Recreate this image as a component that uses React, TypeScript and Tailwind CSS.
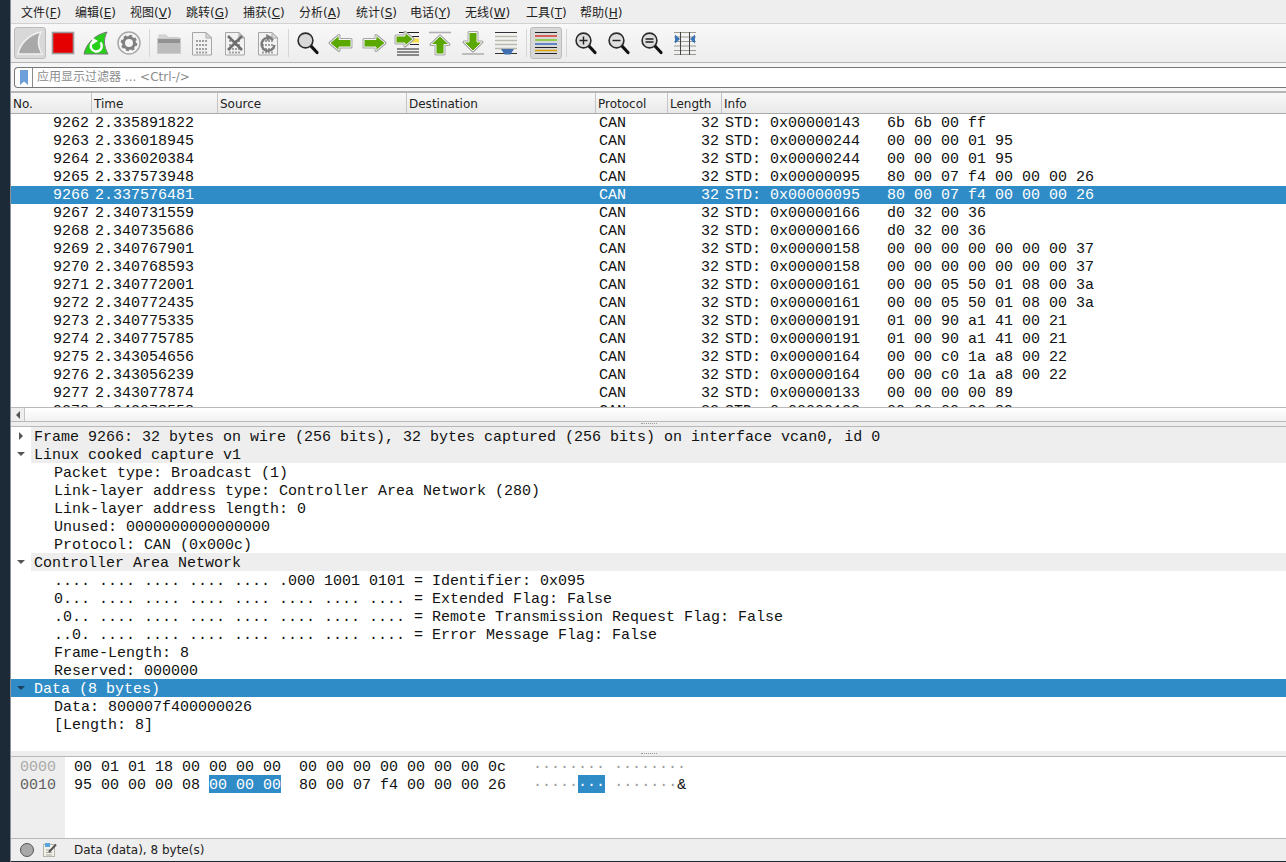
import type { ReactNode } from 'react'

const ui = 'font-["DejaVu_Sans","Noto_Sans_CJK_SC",sans-serif]'
const mono = 'font-["Liberation_Mono",monospace]'

const menus = [
  { label: '文件', key: 'F', width: 'w-[54px]' },
  { label: '编辑', key: 'E', width: 'w-[55px]' },
  { label: '视图', key: 'V', width: 'w-[56px]' },
  { label: '跳转', key: 'G', width: 'w-[57px]' },
  { label: '捕获', key: 'C', width: 'w-[56px]' },
  { label: '分析', key: 'A', width: 'w-[57px]' },
  { label: '统计', key: 'S', width: 'w-[54px]' },
  { label: '电话', key: 'Y', width: 'w-[55px]' },
  { label: '无线', key: 'W', width: 'w-[61px]' },
  { label: '工具', key: 'T', width: 'w-[54px]' },
  { label: '帮助', key: 'H', width: 'w-[60px]' },
]

const packets = [
  ['9262', '2.335891822', 'STD: 0x00000143   6b 6b 00 ff'],
  ['9263', '2.336018945', 'STD: 0x00000244   00 00 00 01 95'],
  ['9264', '2.336020384', 'STD: 0x00000244   00 00 00 01 95'],
  ['9265', '2.337573948', 'STD: 0x00000095   80 00 07 f4 00 00 00 26'],
  ['9266', '2.337576481', 'STD: 0x00000095   80 00 07 f4 00 00 00 26'],
  ['9267', '2.340731559', 'STD: 0x00000166   d0 32 00 36'],
  ['9268', '2.340735686', 'STD: 0x00000166   d0 32 00 36'],
  ['9269', '2.340767901', 'STD: 0x00000158   00 00 00 00 00 00 00 37'],
  ['9270', '2.340768593', 'STD: 0x00000158   00 00 00 00 00 00 00 37'],
  ['9271', '2.340772001', 'STD: 0x00000161   00 00 05 50 01 08 00 3a'],
  ['9272', '2.340772435', 'STD: 0x00000161   00 00 05 50 01 08 00 3a'],
  ['9273', '2.340775335', 'STD: 0x00000191   01 00 90 a1 41 00 21'],
  ['9274', '2.340775785', 'STD: 0x00000191   01 00 90 a1 41 00 21'],
  ['9275', '2.343054656', 'STD: 0x00000164   00 00 c0 1a a8 00 22'],
  ['9276', '2.343056239', 'STD: 0x00000164   00 00 c0 1a a8 00 22'],
  ['9277', '2.343077874', 'STD: 0x00000133   00 00 00 00 89'],
  ['9278', '2.343078558', 'STD: 0x00000133   00 00 00 00 89'],
]

type TreeRow = { text: string; level: 0 | 1; open?: boolean; closed?: boolean; selected?: boolean }

const tree: TreeRow[] = [
  { text: 'Frame 9266: 32 bytes on wire (256 bits), 32 bytes captured (256 bits) on interface vcan0, id 0', level: 0, closed: true },
  { text: 'Linux cooked capture v1', level: 0, open: true },
  { text: 'Packet type: Broadcast (1)', level: 1 },
  { text: 'Link-layer address type: Controller Area Network (280)', level: 1 },
  { text: 'Link-layer address length: 0', level: 1 },
  { text: 'Unused: 0000000000000000', level: 1 },
  { text: 'Protocol: CAN (0x000c)', level: 1 },
  { text: 'Controller Area Network', level: 0, open: true },
  { text: '.... .... .... .... .... .000 1001 0101 = Identifier: 0x095', level: 1 },
  { text: '0... .... .... .... .... .... .... .... = Extended Flag: False', level: 1 },
  { text: '.0.. .... .... .... .... .... .... .... = Remote Transmission Request Flag: False', level: 1 },
  { text: '..0. .... .... .... .... .... .... .... = Error Message Flag: False', level: 1 },
  { text: 'Frame-Length: 8', level: 1 },
  { text: 'Reserved: 000000', level: 1 },
  { text: 'Data (8 bytes)', level: 0, open: true, selected: true },
  { text: 'Data: 800007f400000026', level: 1 },
  { text: '[Length: 8]', level: 1 },
]

function Icon({ children }: { children: ReactNode }) {
  return (
    <svg width="28" height="28" viewBox="0 0 28 28" fill="none">
      {children}
    </svg>
  )
}

function Tool({ children, active }: { children: ReactNode; active?: boolean }) {
  return (
    <div className={`w-[32px] h-[32px] flex items-center justify-center rounded-[3px] border ${active ? 'bg-[#d8d8d8] border-[#bcbcbc]' : 'border-transparent'}`}>
      {children}
    </div>
  )
}

function Sep() {
  return <div className="w-[6px] h-[28px] flex justify-center"><div className="w-px h-full bg-[#d6d6d6]" /></div>
}

const finPath = 'M2 25 C4 15 12 6 25 3 C21 10 22 18 26 25 Z'

function DocIcon({ children }: { children?: ReactNode }) {
  return (
    <Icon>
      <path d="M4.5 3.5 H18 L23.5 9 V26 H4.5 Z" fill="#f2f2f2" stroke="#a6a6a6" />
      <path d="M18 3.5 V9 H23.5 Z" fill="#dcdcdc" stroke="#a6a6a6" />
      <path d="M8 12 H20 M8 16 H20 M8 20 H20 M8 23.5 H20" stroke="#a0a0a0" strokeWidth="2" strokeDasharray="2 1" />
      {children}
    </Icon>
  )
}

function Magnifier({ children, plain }: { children?: ReactNode; plain?: boolean }) {
  return (
    <Icon>
      <path d="M16.5 16.5 L23 23.5" stroke="#111" strokeWidth="3.2" strokeLinecap="round" />
      <circle cx="11.5" cy="11.5" r="7.4" fill={plain ? '#d8d8d8' : '#dedede'} stroke="#2a2a2a" strokeWidth="1.6" />
      {children}
    </Icon>
  )
}

function Arrow({ d }: { d: string }) {
  return (
    <>
      <path d={d} fill="#5aa800" stroke="#a6a6a6" strokeWidth="3" strokeLinejoin="round" />
      <path d={d} fill="#5aa800" stroke="#f4f4f4" strokeWidth="1" strokeLinejoin="round" />
    </>
  )
}

function Toolbar() {
  return (
    <div className="h-[38px] pl-[3px] flex items-center gap-px bg-gradient-to-b from-[#f8f8f8] to-[#ededed]">
      <Tool active>
        <Icon><path d={finPath} fill="#a9a9a9" stroke="#f1f1f1" strokeWidth="1.5" /></Icon>
      </Tool>
      <Tool>
        <Icon>
          <rect x="3.5" y="3.5" width="21" height="21" fill="#e40000" stroke="#9c9c9c" strokeWidth="1.6" />
        </Icon>
      </Tool>
      <Tool>
        <Icon>
          <path d={finPath} fill="#26d018" stroke="#777" strokeWidth="1" />
          <path d="M18.5 13.5 A5.5 5.5 0 1 1 12 12" stroke="#fff" strokeWidth="2.4" />
          <path d="M10 8.5 L16 12 L10.5 15.5 Z" fill="#fff" />
        </Icon>
      </Tool>
      <Tool>
        <Icon>
          <circle cx="14" cy="14" r="11" fill="#f6f6f6" stroke="#a8a8a8" strokeWidth="1.5" />
          <circle cx="14" cy="14" r="5.5" stroke="#808080" strokeWidth="3" />
          <circle cx="14" cy="14" r="7.3" stroke="#808080" strokeWidth="2" strokeDasharray="3 2.73" />
        </Icon>
      </Tool>
      <Sep />
      <Tool>
        <Icon>
          <path d="M4 6 H11 L13 8.5 H24 V11 H4 Z" fill="#d4d4d4" stroke="#cccccc" />
          <rect x="2.5" y="9.5" width="23" height="15" fill="#bcbcbc" stroke="#cccccc" />
          <rect x="3" y="10" width="22" height="4" fill="#929292" />
        </Icon>
      </Tool>
      <Tool><DocIcon /></Tool>
      <Tool>
        <DocIcon>
          <path d="M7 7 L21 21 M21 7 L7 21" stroke="#6e6e6e" strokeWidth="2.6" />
        </DocIcon>
      </Tool>
      <Tool>
        <DocIcon>
          <path d="M19 11 A6.5 6.5 0 1 0 20.5 16" stroke="#7b7b7b" strokeWidth="2.4" />
          <path d="M12 5 L18 8 L13 12 Z" fill="#7b7b7b" />
        </DocIcon>
      </Tool>
      <Sep />
      <Tool><Magnifier plain /></Tool>
      <Tool>
        <Icon><Arrow d="M3 14 L12 6.5 V10.5 H24 V18 H12 V21.5 Z" /></Icon>
      </Tool>
      <Tool>
        <Icon><Arrow d="M25 14 L16 6.5 V10.5 H4 V18 H16 V21.5 Z" /></Icon>
      </Tool>
      <Tool>
        <Icon>
          <path d="M6 3.5 H26 M15 7.5 H26 M17 15.5 H26 M4 20 H26 M4 23 H26 M4 26 H26" stroke="#222" />
          <rect x="18" y="9.5" width="8" height="4" fill="#f5dc4a" />
          <Arrow d="M20 10 L12 3.5 V7 H3 V14 H12 V17 Z" />
        </Icon>
      </Tool>
      <Tool>
        <Icon>
          <path d="M3 3.5 H25" stroke="#b0b0b0" strokeWidth="1.6" />
          <Arrow d="M14 7 L23 15.5 H18 V25 H10 V15.5 H5 Z" />
        </Icon>
      </Tool>
      <Tool>
        <Icon>
          <path d="M3 25 H25" stroke="#b0b0b0" strokeWidth="1.6" />
          <Arrow d="M14 22 L23 13 H18 V3.5 H10 V13 H5 Z" />
        </Icon>
      </Tool>
      <Tool>
        <Icon>
          <path d="M3 3.5 H25 M3 24.5 H25" stroke="#333" />
          <path d="M3 7.5 H25 M3 11.5 H25 M3 15.5 H25 M3 19.5 H25" stroke="#b9b9ad" strokeWidth="1.3" />
          <path d="M9 20 H22 L18.5 25.5 H12.5 Z" fill="#3f6fae" />
        </Icon>
      </Tool>
      <Sep />
      <Tool active>
        <Icon>
          <path d="M3 3.5 H25 M3 18.5 H25 M3 24.5 H25" stroke="#222" />
          <path d="M3 7 H25" stroke="#d8372e" strokeWidth="1.5" />
          <path d="M3 11 H25" stroke="#7cc72d" strokeWidth="1.5" />
          <path d="M3 15 H25" stroke="#3a6bc0" strokeWidth="1.5" />
          <path d="M3 21.5 H25" stroke="#d9a400" strokeWidth="1.5" />
        </Icon>
      </Tool>
      <Sep />
      <Tool>
        <Magnifier><path d="M7.5 11.5 H15.5 M11.5 7.5 V15.5" stroke="#222" strokeWidth="1.4" /></Magnifier>
      </Tool>
      <Tool>
        <Magnifier><path d="M7.5 11.5 H15.5" stroke="#222" strokeWidth="1.4" /></Magnifier>
      </Tool>
      <Tool>
        <Magnifier><path d="M7.5 10 H15.5 M7.5 13 H15.5" stroke="#222" strokeWidth="1.4" /></Magnifier>
      </Tool>
      <Tool>
        <Icon>
          <path d="M3 3.5 H25 M3 8 H25 M3 12.5 H25 M3 17 H25 M3 21.5 H25 M3 25.5 H25" stroke="#9a9a8e" strokeWidth="1.2" />
          <path d="M9.5 3 V26 M18.5 3 V26" stroke="#444" />
          <path d="M4 5.5 L9 10 L4 14.5 Z M24 5.5 L19 10 L24 14.5 Z" fill="#3a74b8" />
        </Icon>
      </Tool>
    </div>
  )
}

function FilterBar() {
  return (
    <div className="h-[28px] shrink-0 pl-[3px] pt-[4px] bg-[#f6f6f6]">
      <div className="h-[21px] flex bg-white border-y border-l border-[#777] rounded-l-[4px]">
        <div className="w-[18px] flex items-center justify-center border-r border-[#8a8a8a]">
          <svg width="10" height="15" viewBox="0 0 10 15">
            <path d="M1 0 H9 V15 L5 11.5 L1 15 Z" fill="#6f9fd8" />
          </svg>
        </div>
        <div className={`pl-[4px] text-[12px] leading-[19px] text-[#8d8d8d] ${ui}`}>应用显示过滤器 ... &lt;Ctrl-/&gt;</div>
      </div>
    </div>
  )
}

function HeaderCell({ label, width }: { label: string; width: string }) {
  return <div className={`${width} h-full pl-[2px] border-r border-[#c4c4c4] leading-[23px]`}>{label}</div>
}

function ColumnHeader() {
  return (
    <div className={`h-[23px] shrink-0 flex text-[12px] text-[#222] border-b border-[#aaa] border-t-2 border-t-[#b6b6b6] bg-gradient-to-b from-[#f8f8f8] to-[#e9e9e9] ${ui}`}>
      <HeaderCell label="No." width="w-[81px]" />
      <HeaderCell label="Time" width="w-[126px]" />
      <HeaderCell label="Source" width="w-[189px]" />
      <HeaderCell label="Destination" width="w-[189px]" />
      <HeaderCell label="Protocol" width="w-[72px]" />
      <HeaderCell label="Length" width="w-[54px]" />
      <div className="pl-[2px] leading-[23px]">Info</div>
    </div>
  )
}

function PacketList() {
  return (
    <div className={`h-[293px] shrink-0 overflow-hidden bg-white text-[15px] leading-[20px] text-[#111] ${mono}`}>
      {packets.map(([no, time, info], i) => (
        <div key={no} className={`h-[18px] flex whitespace-pre ${i === 4 ? 'bg-[#308cc6] text-white' : ''}`}>
          <div className="w-[81px] pr-[3px] text-right">{no}</div>
          <div className="w-[504px] pl-[3px]">{time}</div>
          <div className="w-[72px] pl-[3px]">CAN</div>
          <div className="w-[54px] pr-[3px] text-right">32</div>
          <div className="pl-[3px]">{info}</div>
        </div>
      ))}
    </div>
  )
}

function HScrollbar() {
  return (
    <div className="h-[15px] shrink-0 flex border-y border-[#b9b9b9] bg-gradient-to-b from-[#ffffff] to-[#f2f2f2]">
      <div className="w-[14px] flex items-center justify-center border-r border-[#c4c4c4] bg-[#eeeeee]">
        <div className="w-0 h-0 border-y-[4px] border-y-transparent border-r-[4px] border-r-[#555]" />
      </div>
    </div>
  )
}

function Splitter({ height }: { height: string }) {
  return (
    <div className={`${height} shrink-0 flex items-center justify-center bg-[#eeeeee] border-b border-[#b9b9b9]`}>
      <div className="w-[16px] h-[2px] border-t border-dotted border-[#9a9a9a]" />
    </div>
  )
}

function Tree() {
  return (
    <div className={`flex-1 bg-white text-[15px] leading-[22px] text-[#111] ${mono}`}>
      {tree.map(row => (
        <div key={row.text} className={`h-[18px] flex whitespace-pre ${row.selected ? 'bg-[#308cc6] text-white' : ''}`}>
          <div className="w-[20px] flex items-center justify-center">
            {row.closed && <div className="w-0 h-0 border-y-[4px] border-y-transparent border-l-[4px] border-l-[#555]" />}
            {row.open && <div className={`w-0 h-0 border-x-[4px] border-x-transparent border-t-[4px] ${row.selected ? 'border-t-[#1d3f5c]' : 'border-t-[#555]'}`} />}
          </div>
          {row.level === 0 ? (
            <div className={`flex-1 pl-[3px] h-[18px] ${row.selected ? '' : 'bg-[#eeeeee]'}`}>{row.text}</div>
          ) : (
            <div className="pl-[23px]">{row.text}</div>
          )}
        </div>
      ))}
    </div>
  )
}

function HexMark({ children }: { children: ReactNode }) {
  return <span className="inline-block h-[18px] -mt-[2px] pt-[2px] bg-[#308cc6] text-white">{children}</span>
}

function HexPane() {
  return (
    <div className={`h-[81px] shrink-0 flex bg-white text-[15px] leading-[18px] text-[#111] whitespace-pre ${mono}`}>
      <div className="w-[54px] pl-[9px] bg-[#eeeeee]">
        <div className="h-[18px] pt-[2px] text-[#a9a9a9]">0000</div>
        <div className="h-[18px] pt-[2px] text-[#5f5f5f]">0010</div>
      </div>
      <div className="pl-[9px]">
        <div className="h-[18px] pt-[2px]">
          00 01 01 18 00 00 00 00  00 00 00 00 00 00 00 0c   <span className="text-[#9a9a9a]">········ ········</span>
        </div>
        <div className="h-[18px] pt-[2px]">
          95 00 00 00 08 <HexMark>00 00 00</HexMark>  80 00 07 f4 00 00 00 26   <span className="text-[#9a9a9a]">·····</span><HexMark>···</HexMark> <span className="text-[#9a9a9a]">·······</span>&amp;
        </div>
      </div>
    </div>
  )
}

function StatusBar() {
  return (
    <div className={`h-[23px] shrink-0 flex items-center border-t border-[#b9b9b9] bg-[#eeeeee] text-[12px] text-[#222] ${ui}`}>
      <div className="ml-[9px] w-[14px] h-[14px] rounded-full bg-[#a8a8a8] border border-[#555]" />
      <svg className="ml-[8px]" width="16" height="16" viewBox="0 0 16 16">
        <rect x="1.5" y="2.5" width="11" height="12" fill="#f2f2ea" stroke="#b5b5a8" />
        <rect x="3" y="1" width="5" height="4" fill="#5ba3dc" />
        <path d="M4 8 H10 M4 10.5 H10 M4 13 H10" stroke="#a8a89c" />
        <path d="M7 10 L14 2.5" stroke="#555" strokeWidth="2" />
      </svg>
      <div className="ml-[16px]">Data (data), 8 byte(s)</div>
    </div>
  )
}

export default function App() {
  return (
    <div className="w-[1286px] h-[862px] overflow-hidden flex bg-[#1c2a38]">
      <div className="w-[11px] shrink-0 border-r border-[#8c9298]" />
      <div className="flex-1 min-w-0 flex flex-col bg-[#eeeeee] pt-[2px]">
        <div className={`h-[22px] shrink-0 pl-[3px] flex items-center border-b border-[#d2d2d2] text-[12px] text-[#222] ${ui}`}>
          {menus.map(m => (
            <div key={m.key} className={`${m.width} pl-[7px] whitespace-nowrap`}>
              {m.label}(<u>{m.key}</u>)
            </div>
          ))}
        </div>
        <div className="shrink-0 border-b border-[#b4b4b4]">
          <Toolbar />
        </div>
        <FilterBar />
        <ColumnHeader />
        <PacketList />
        <HScrollbar />
        <Splitter height="h-[5px]" />
        <Tree />
        <Splitter height="h-[6px]" />
        <HexPane />
        <StatusBar />
        <div className="h-px shrink-0 bg-[#1c2a38]" />
      </div>
    </div>
  )
}
